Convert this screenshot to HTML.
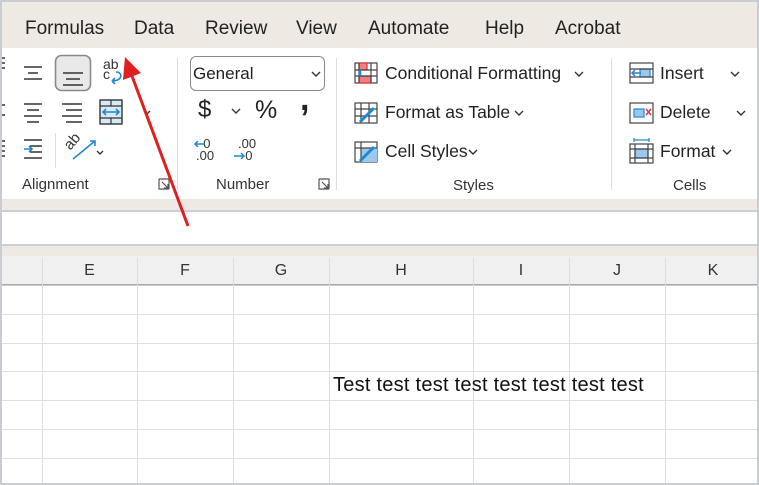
<!DOCTYPE html>
<html><head><meta charset="utf-8"><style>
*{margin:0;padding:0;box-sizing:border-box}
body{width:759px;height:485px;overflow:hidden;background:#c9ccd3;font-family:"Liberation Sans",sans-serif;position:relative}
.a{position:absolute}
.t{position:absolute;font-size:19px;color:#222;letter-spacing:0px;white-space:nowrap}
.r{font-size:17.5px;color:#222;position:absolute;white-space:nowrap;letter-spacing:0}
.lbl{font-size:15px;color:#333;position:absolute;white-space:nowrap}
.vl{position:absolute;width:1px;background:#dedede}
.hl{position:absolute;height:1px;background:#e0e0e0}
.ch{position:absolute;top:262px;font-size:16px;color:#333;text-align:center}
</style></head><body>
<div class="a" style="left:2px;top:2px;width:755px;height:46px;background:#eeeae3"></div>
<span class="t" style="left:25px;top:18px">Formulas</span>
<span class="t" style="left:134px;top:18px">Data</span>
<span class="t" style="left:205px;top:18px">Review</span>
<span class="t" style="left:296px;top:18px">View</span>
<span class="t" style="left:368px;top:18px">Automate</span>
<span class="t" style="left:485px;top:18px">Help</span>
<span class="t" style="left:555px;top:18px">Acrobat</span>
<!-- ribbon -->
<div class="a" style="left:2px;top:48px;width:755px;height:151px;background:#fff"></div>
<div class="a" style="left:2px;top:199px;width:755px;height:12px;background:#eeeae3;border-bottom:1px solid #d0d0d0"></div>
<div class="a" style="left:2px;top:212px;width:755px;height:33px;background:#fff;border-bottom:1px solid #d0d0d0"></div>
<div class="a" style="left:2px;top:246px;width:755px;height:10px;background:#eeeae3"></div>
<div class="vl" style="left:177px;top:58px;height:132px"></div>
<div class="vl" style="left:336px;top:58px;height:132px"></div>
<div class="vl" style="left:611px;top:58px;height:132px"></div>
<div class="vl" style="left:55px;top:133px;height:35px"></div>
<svg class="a" style="left:0;top:50px" width="180" height="120" stroke="#333" stroke-width="1.6" fill="none">
<path d="M2 8h3M2 13h3M2 18h3"/>
<path d="M24 17h18M28 23h10M24 29h18"/>
<rect x="55.5" y="5.5" width="35" height="35" rx="6" fill="#e9e9e9" stroke="#8a8a8a"/>
<path d="M63 23h20M66 29h14M63 35h20"/>
<path d="M2 55h3M2 65h3"/>
<path d="M24 54h18M27 60h12M24 66h18M27 72h12"/>
<path d="M62 54h20M66 60h16M62 66h20M66 72h16"/>
<rect x="100" y="50" width="22" height="24" fill="#d6e9f7" stroke="#333" stroke-width="1.4"/>
<path d="M100 56h22M100 68h22M111 68v6M111 50v6" stroke-width="1.2"/>
<path d="M103 62h16M106 59l-3 3 3 3M116 59l3 3-3 3" stroke="#1e88d0"/>
<path d="M144 61l3 3 3-3" stroke-width="1.4"/>
<path d="M2 91h3M2 96h3M2 101h3M2 106h3"/>
<path d="M24 90h18M30 96h12M30 102h12M24 108h18"/>
<path d="M24 99h8M29 96l3 3-3 3" stroke="#1e88d0"/>
<path d="M73 109l22-18M90 91h5v5" stroke="#1e88d0"/>
<path d="M97 101l3 3 3-3" stroke-width="1.4"/>
<path d="M116 22c4 0 6 3 4 6-1 2-5 3-8 3M112 31l3-3M112 31l3 3" stroke="#1e88d0"/>
</svg>
<span class="a" style="left:103px;top:59px;font-size:14px;color:#333;line-height:10px">ab<br>c</span>
<span class="a" style="left:64px;top:133px;font-size:15px;color:#333;transform:rotate(-50deg);transform-origin:center">ab</span>
<span class="lbl" style="left:22px;top:176px">Alignment</span>
<svg class="a" style="left:158px;top:178px" width="12" height="12" stroke="#555" fill="none" stroke-width="1.2"><path d="M1 1h10v10M1 1v10h10M4 4l6 6M10 6v4H6"/></svg>
<!-- number -->
<div class="a" style="left:190px;top:56px;width:135px;height:35px;border:1px solid #8a8a8a;border-radius:6px"></div>
<span class="r" style="left:193px;top:64px;font-size:17px;letter-spacing:0">General</span>
<svg class="a" style="left:311px;top:70px" width="10" height="8" stroke="#333" fill="none" stroke-width="1.4"><path d="M1 2l4 4 4-4"/></svg>
<span class="a" style="left:198px;top:96px;font-size:24px;color:#222">$</span>
<svg class="a" style="left:231px;top:107px" width="10" height="8" stroke="#333" fill="none" stroke-width="1.4"><path d="M1 2l4 4 4-4"/></svg>
<span class="a" style="left:255px;top:96px;font-size:25px;color:#222">%</span>
<span class="a" style="left:300px;top:80px;font-size:34px;font-weight:bold;color:#222">,</span>
<span class="a" style="left:196px;top:138px;font-size:13px;color:#333;line-height:12px">&nbsp;&nbsp;0<br>.00</span>
<span class="a" style="left:238px;top:138px;font-size:13px;color:#333;line-height:12px">.00<br>&nbsp;&nbsp;0</span>
<svg class="a" style="left:193px;top:138px" width="70" height="30" stroke="#1e88d0" fill="none" stroke-width="1.5"><path d="M2 6h10M5 3L2 6l3 3M41 18h10M48 15l3 3-3 3"/></svg>
<span class="lbl" style="left:216px;top:176px">Number</span>
<svg class="a" style="left:318px;top:178px" width="12" height="12" stroke="#555" fill="none" stroke-width="1.2"><path d="M1 1h10v10M1 1v10h10M4 4l6 6M10 6v4H6"/></svg>
<!-- styles -->
<svg class="a" style="left:354px;top:62px" width="26" height="105" stroke="#444" fill="none" stroke-width="1.2">
<rect x="1" y="1" width="22" height="20" fill="#fff"/>
<rect x="5" y="1" width="8" height="7" fill="#f08080" stroke="#d33"/><rect x="5" y="14" width="12" height="7" fill="#f08080" stroke="#d33"/>
<path d="M1 8h22M1 14h22M5 1v20M17 1v20"/><path d="M6 8v6" stroke="#1e88d0" stroke-width="2.5"/>
<rect x="1" y="41" width="22" height="20"/><path d="M1 47h22M1 54h22M7 41v20M15 41v20"/>
<path d="M6 60l14-14" stroke="#1e88d0" stroke-width="3"/>
<rect x="1" y="80" width="22" height="20"/><rect x="7" y="86" width="16" height="14" fill="#9cc8ee" stroke="none"/><path d="M1 86h22M7 80v20"/>
<path d="M6 99l14-14" stroke="#1e88d0" stroke-width="3"/>
</svg>
<span class="r" style="left:385px;top:63px">Conditional Formatting</span>
<span class="r" style="left:385px;top:102px">Format as Table</span>
<span class="r" style="left:385px;top:141px">Cell Styles</span>
<svg class="a" style="left:574px;top:70px" width="10" height="8" stroke="#333" fill="none" stroke-width="1.4"><path d="M1 2l4 4 4-4"/></svg>
<svg class="a" style="left:514px;top:109px" width="10" height="8" stroke="#333" fill="none" stroke-width="1.4"><path d="M1 2l4 4 4-4"/></svg>
<svg class="a" style="left:468px;top:148px" width="10" height="8" stroke="#333" fill="none" stroke-width="1.4"><path d="M1 2l4 4 4-4"/></svg>
<span class="lbl" style="left:453px;top:177px">Styles</span>
<!-- cells -->
<svg class="a" style="left:629px;top:62px" width="26" height="105" stroke="#444" fill="none" stroke-width="1.2">
<rect x="1" y="1" width="23" height="20"/><rect x="11" y="7" width="10" height="8" fill="#9cc8ee" stroke="#1e88d0"/><path d="M1 7h23M1 15h23"/><path d="M3 11h9M6 8l-3 3 3 3" stroke="#1e88d0" stroke-width="1.5"/>
<rect x="1" y="41" width="23" height="20"/><rect x="5" y="47" width="10" height="8" fill="#9cc8ee" stroke="#1e88d0"/><path d="M17 47l5 6M22 47l-5 6" stroke="#e33" stroke-width="1.5"/>
<rect x="1" y="82" width="23" height="19"/><rect x="6" y="87" width="13" height="9" fill="#9cc8ee" stroke="#1e88d0"/><path d="M1 87h23M1 96h23M6 82v19M19 82v19"/><path d="M5 78h15M5 76v4M20 76v4" stroke="#1e88d0"/>
</svg>
<span class="r" style="left:660px;top:63px">Insert</span>
<span class="r" style="left:660px;top:102px">Delete</span>
<span class="r" style="left:660px;top:141px">Format</span>
<svg class="a" style="left:730px;top:70px" width="10" height="8" stroke="#333" fill="none" stroke-width="1.4"><path d="M1 2l4 4 4-4"/></svg>
<svg class="a" style="left:736px;top:109px" width="10" height="8" stroke="#333" fill="none" stroke-width="1.4"><path d="M1 2l4 4 4-4"/></svg>
<svg class="a" style="left:722px;top:148px" width="10" height="8" stroke="#333" fill="none" stroke-width="1.4"><path d="M1 2l4 4 4-4"/></svg>
<span class="lbl" style="left:673px;top:177px">Cells</span>
<!-- grid -->
<div class="a" style="left:2px;top:256px;width:755px;height:29px;background:#f0f0f0;border-bottom:1px solid #a8a8a8"></div>
<div class="a" style="left:2px;top:286px;width:755px;height:197px;background:#fff"></div>
<div class="vl" style="left:42px;top:258px;height:225px"></div>
<div class="vl" style="left:137px;top:258px;height:225px"></div>
<div class="vl" style="left:233px;top:258px;height:225px"></div>
<div class="vl" style="left:329px;top:258px;height:225px"></div>
<div class="vl" style="left:473px;top:258px;height:225px"></div>
<div class="vl" style="left:569px;top:258px;height:225px"></div>
<div class="vl" style="left:665px;top:258px;height:225px"></div>
<div class="hl" style="left:2px;top:314px;width:755px"></div>
<div class="hl" style="left:2px;top:343px;width:755px"></div>
<div class="hl" style="left:2px;top:371px;width:755px"></div>
<div class="hl" style="left:2px;top:400px;width:755px"></div>
<div class="hl" style="left:2px;top:429px;width:755px"></div>
<div class="hl" style="left:2px;top:458px;width:755px"></div>
<div class="ch" style="left:42px;width:95px">E</div>
<div class="ch" style="left:137px;width:96px">F</div>
<div class="ch" style="left:233px;width:96px">G</div>
<div class="ch" style="left:329px;width:144px">H</div>
<div class="ch" style="left:473px;width:96px">I</div>
<div class="ch" style="left:569px;width:96px">J</div>
<div class="ch" style="left:665px;width:96px">K</div>
<span class="a" style="left:333px;top:374px;font-size:20px;color:#111;letter-spacing:0.25px;white-space:nowrap">Test test test test test test test test</span>
<!-- arrow -->
<svg class="a" style="left:0;top:0" width="759" height="485"><path d="M188 226L132 76" stroke="#e02020" stroke-width="3" fill="none"/><path d="M125 57L123 80L141 73Z" fill="#e02020"/></svg>
</body></html>
